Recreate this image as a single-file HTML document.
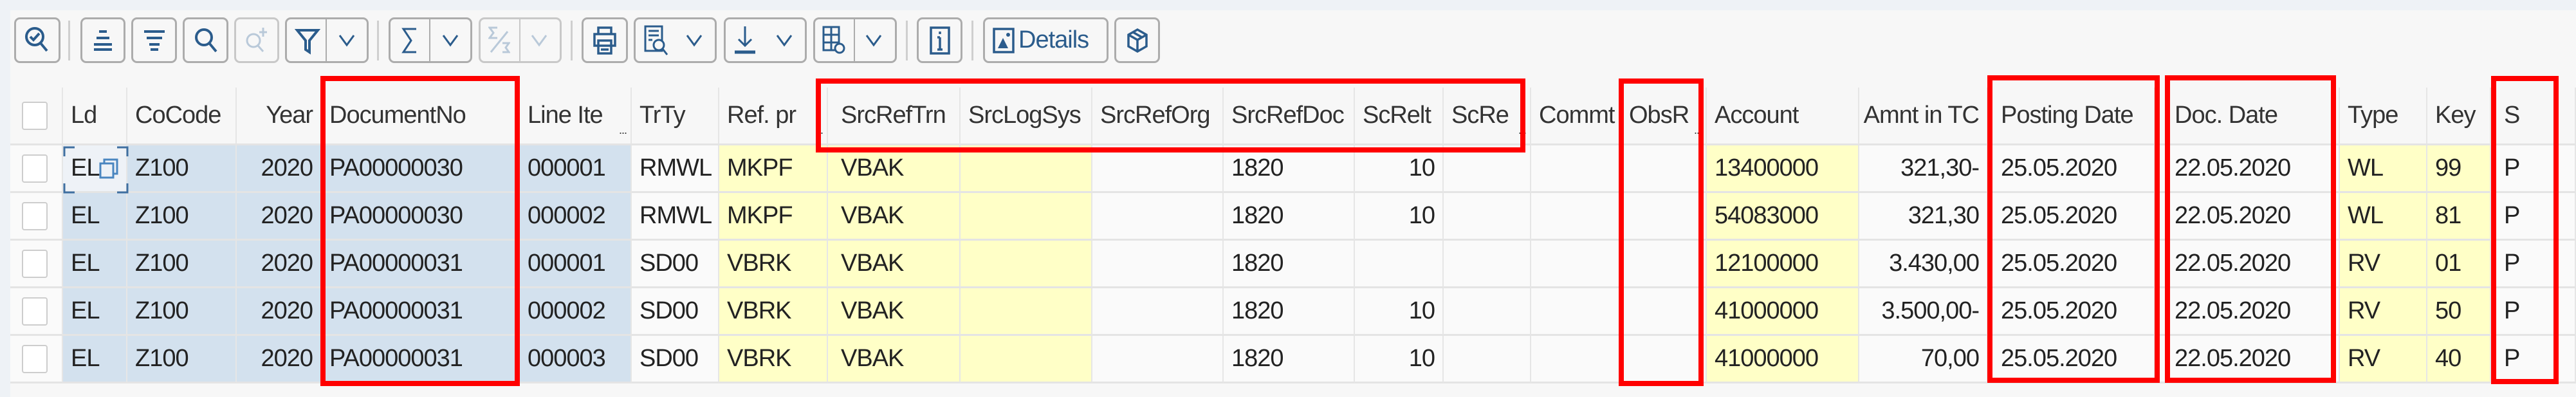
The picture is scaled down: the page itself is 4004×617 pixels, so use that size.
<!DOCTYPE html>
<html><head><meta charset="utf-8">
<style>
*{box-sizing:border-box;margin:0;padding:0}
html,body{width:4004px;height:617px;overflow:hidden;background:#f7f7f7;font-family:"Liberation Sans",sans-serif}
.topband{position:absolute;left:0;top:0;width:4004px;height:16px;background:#eef2f6}
.leftband{position:absolute;left:0;top:0;width:16px;height:617px;background:#eef2f6}
.btn{position:absolute;top:27px;height:71px;border:3px solid #acacac;border-radius:9px;background:#f7f7f7;display:flex;align-items:center;justify-content:center}
.btn .div{position:absolute;top:0;bottom:0;width:2px;background:#acacac}
.sep{position:absolute;top:32px;height:62px;width:3px;background:#cfcfcf}
svg{display:block}
.row{position:absolute;left:16px;display:flex;height:74px}
.hdr{top:136px;height:90px}
.c{height:100%;border-right:2px solid #e6e6e6;border-bottom:3px solid #e4e4e4;font-size:38px;color:#222;display:flex;align-items:center;padding:0 12px;white-space:nowrap;overflow:hidden;background:#fafafa;letter-spacing:-1px}
.hdr .c{background:#f7f7f7;color:#333;position:relative}
.r{justify-content:flex-end}
.p{padding-left:20px}
.q{padding-left:30px}
.b{background:#d3e1ee!important}
.y{background:#ffffc7!important}
.cb{width:40px;height:44px;border:2px solid #cdcdcd;border-radius:4px;background:#fff;margin-left:6px}
.ell{position:absolute;right:6px;bottom:10px;font-size:18px}
.red{position:absolute;border:8px solid #ff0000}
</style></head><body>
<div class="topband"></div><div class="leftband"></div>

<div class="btn" style="left:22px;width:72px"><svg width="44" height="48" viewBox="0 0 44 48"><circle cx="18" cy="18" r="13" fill="none" stroke="#2b5c8c" stroke-width="4"/><path d="M11 18l5 5 9-10M27 28l10 12" fill="none" stroke="#2b5c8c" stroke-width="4"/></svg></div>
<div class="sep" style="left:106px"></div>
<div class="btn" style="left:125px;width:70px"><svg width="40" height="40"><path d="M14 6h12M10 16h20M6 26h28M6 34h28" stroke="#2b5c8c" stroke-width="4"/></svg></div>
<div class="btn" style="left:204px;width:71px"><svg width="40" height="40"><path d="M4 6h32M8 16h24M12 26h16M14 34h12" stroke="#2b5c8c" stroke-width="4"/></svg></div>
<div class="btn" style="left:284px;width:71px"><svg width="40" height="44"><circle cx="17" cy="17" r="12" fill="none" stroke="#2b5c8c" stroke-width="4"/><path d="M26 27l10 12" stroke="#2b5c8c" stroke-width="4"/></svg></div>
<div class="btn" style="left:364px;width:70px;border-color:#c8c8c8"><svg width="40" height="44"><circle cx="15" cy="22" r="10" fill="none" stroke="#b9c9d9" stroke-width="3"/><path d="M22 30l8 9M30 2v14M24 9h12" stroke="#b9c9d9" stroke-width="3"/></svg></div>
<div class="btn" style="left:443px;width:130px;justify-content:flex-start"><svg style="margin-left:12px" width="40" height="44"><path d="M4 6h32L23 22v18l-6-4V22z" fill="none" stroke="#2b5c8c" stroke-width="4"/></svg><div class="div" style="left:60px"></div><svg style="margin-left:28px" width="26" height="20"><path d="M2 2l11 15L24 2" fill="none" stroke="#2b5c8c" stroke-width="3"/></svg></div>
<div class="sep" style="left:586px"></div>
<div class="btn" style="left:604px;width:130px;justify-content:flex-start"><svg style="margin-left:14px" width="30" height="44"><path d="M26 4H6l12 18L6 40h20" fill="none" stroke="#2b5c8c" stroke-width="3"/></svg><div class="div" style="left:60px"></div><svg style="margin-left:36px" width="26" height="20"><path d="M2 2l11 15L24 2" fill="none" stroke="#2b5c8c" stroke-width="3"/></svg></div>
<div class="btn" style="left:744px;width:129px;justify-content:flex-start;border-color:#c8c8c8"><svg style="margin-left:12px" width="34" height="44"><path d="M14 2H2l6 8-6 8h12M4 40L30 8M22 26h10l-5 7 5 7H22" fill="none" stroke="#b9c9d9" stroke-width="3"/></svg><div class="div" style="left:60px;background:#c8c8c8"></div><svg style="margin-left:32px" width="26" height="20"><path d="M2 2l11 15L24 2" fill="none" stroke="#b9c9d9" stroke-width="3"/></svg></div>
<div class="sep" style="left:887px"></div>
<div class="btn" style="left:904px;width:72px"><svg width="40" height="48"><path d="M10 4h20v10H10zM4 14h32v18H4zM10 24h20v20H10zM14 32h12M14 38h12" fill="#f7f7f7" stroke="#2b5c8c" stroke-width="3.5"/></svg></div>
<div class="btn" style="left:985px;width:129px;justify-content:flex-start"><svg style="margin-left:12px" width="44" height="50"><path d="M3 3h26v38H3z" fill="none" stroke="#2b5c8c" stroke-width="3"/><path d="M8 10h16M8 17h16M8 24h6" stroke="#2b5c8c" stroke-width="3"/><circle cx="24" cy="32" r="8" fill="#f7f7f7" stroke="#2b5c8c" stroke-width="3"/><path d="M30 38l7 9" stroke="#2b5c8c" stroke-width="3"/></svg><svg style="margin-left:22px" width="26" height="20"><path d="M2 2l11 15L24 2" fill="none" stroke="#2b5c8c" stroke-width="3"/></svg></div>
<div class="btn" style="left:1125px;width:129px;justify-content:flex-start"><svg style="margin-left:12px" width="36" height="48"><path d="M18 2v30M8 22l10 10 10-10" fill="none" stroke="#2b5c8c" stroke-width="3"/><path d="M2 42h32" stroke="#2b5c8c" stroke-width="5"/></svg><svg style="margin-left:30px" width="26" height="20"><path d="M2 2l11 15L24 2" fill="none" stroke="#2b5c8c" stroke-width="3"/></svg></div>
<div class="btn" style="left:1264px;width:130px;justify-content:flex-start"><svg style="margin-left:10px" width="40" height="48"><path d="M3 3h24v36H3zM3 15h24M3 27h24M15 3v36" fill="none" stroke="#2b5c8c" stroke-width="3"/><circle cx="28" cy="36" r="7" fill="#f7f7f7" stroke="#2b5c8c" stroke-width="3"/></svg><div class="div" style="left:60px"></div><svg style="margin-left:28px" width="26" height="20"><path d="M2 2l11 15L24 2" fill="none" stroke="#2b5c8c" stroke-width="3"/></svg></div>
<div class="sep" style="left:1408px"></div>
<div class="btn" style="left:1425px;width:71px"><svg width="32" height="44"><rect x="2" y="2" width="28" height="40" fill="none" stroke="#2b5c8c" stroke-width="3.5"/><path d="M16 8v4M16 17v19M12 36h8M12 17h4" stroke="#2b5c8c" stroke-width="3.5"/></svg></div>
<div class="sep" style="left:1510px"></div>
<div class="btn" style="left:1528px;width:195px;justify-content:flex-start"><svg style="margin-left:12px" width="34" height="40"><rect x="2" y="2" width="30" height="36" fill="none" stroke="#2b5c8c" stroke-width="3.5"/><path d="M8 32l8-16 8 16z" fill="#2b5c8c"/><circle cx="24" cy="11" r="3" fill="#2b5c8c"/></svg><span style="font-size:38px;color:#2b5c8c;margin-left:6px;letter-spacing:-1px">Details</span></div>
<div class="btn" style="left:1732px;width:71px"><svg width="36" height="40"><path d="M18 3l14 8v18l-14 8-14-8V11z M4 11l14 8 14-8M18 19v18M11 7l14 8" fill="none" stroke="#2b5c8c" stroke-width="3.5"/></svg></div>

<div class="row hdr">
<div class="c" style="width:82px"><div class="cb"></div></div>
<div class="c" style="width:100px">Ld</div>
<div class="c" style="width:170px">CoCode</div>
<div class="c r" style="width:132px">Year</div>
<div class="c" style="width:308px">DocumentNo</div>
<div class="c" style="width:174px">Line Ite<span class="ell">...</span></div>
<div class="c" style="width:136px">TrTy</div>
<div class="c" style="width:169px">Ref. pr<span class="ell">...</span></div>
<div class="c p" style="width:206px">SrcRefTrn</div>
<div class="c" style="width:205px">SrcLogSys</div>
<div class="c" style="width:204px">SrcRefOrg</div>
<div class="c" style="width:204px">SrcRefDoc</div>
<div class="c" style="width:138px">ScRelt</div>
<div class="c" style="width:136px">ScRe<span class="ell">...</span></div>
<div class="c" style="width:140px">Commt</div>
<div class="c" style="width:133px">ObsR<span class="ell">...</span></div>
<div class="c" style="width:237px">Account</div>
<div class="c r" style="width:200px">Amnt in TC</div>
<div class="c p" style="width:260px">Posting Date</div>
<div class="c q" style="width:287px">Doc. Date</div>
<div class="c" style="width:136px">Type</div>
<div class="c" style="width:99px">Key</div>
<div class="c p" style="width:103px">S</div>
<div class="c" style="width:29px"></div>
</div>

<div class="row" style="top:226px">
<div class="c" style="width:82px"><div class="cb"></div></div>
<div class="c" style="width:100px;background:#eef2f7">EL<svg width="36" height="40" style="margin-left:-2px"><rect x="4" y="12" width="20" height="22" fill="none" stroke="#4a86c0" stroke-width="3"/><path d="M10 12V6h20v22h-6" fill="none" stroke="#4a86c0" stroke-width="3"/></svg></div>
<div class="c b" style="width:170px">Z100</div>
<div class="c b r" style="width:132px">2020</div>
<div class="c b" style="width:308px">PA00000030</div>
<div class="c b" style="width:174px">000001</div>
<div class="c" style="width:136px">RMWL</div>
<div class="c y" style="width:169px">MKPF</div>
<div class="c y p" style="width:206px">VBAK</div>
<div class="c y" style="width:205px"></div>
<div class="c" style="width:204px"></div>
<div class="c" style="width:204px">1820</div>
<div class="c r" style="width:138px">10</div>
<div class="c" style="width:136px"></div>
<div class="c" style="width:140px"></div>
<div class="c" style="width:133px"></div>
<div class="c y" style="width:237px">13400000</div>
<div class="c r" style="width:200px">321,30-</div>
<div class="c p" style="width:260px">25.05.2020</div>
<div class="c q" style="width:287px">22.05.2020</div>
<div class="c y" style="width:136px">WL</div>
<div class="c y" style="width:99px">99</div>
<div class="c p" style="width:103px">P</div>
<div class="c" style="width:29px"></div>
</div>
<div class="row" style="top:300px">
<div class="c" style="width:82px"><div class="cb"></div></div>
<div class="c b" style="width:100px">EL</div>
<div class="c b" style="width:170px">Z100</div>
<div class="c b r" style="width:132px">2020</div>
<div class="c b" style="width:308px">PA00000030</div>
<div class="c b" style="width:174px">000002</div>
<div class="c" style="width:136px">RMWL</div>
<div class="c y" style="width:169px">MKPF</div>
<div class="c y p" style="width:206px">VBAK</div>
<div class="c y" style="width:205px"></div>
<div class="c" style="width:204px"></div>
<div class="c" style="width:204px">1820</div>
<div class="c r" style="width:138px">10</div>
<div class="c" style="width:136px"></div>
<div class="c" style="width:140px"></div>
<div class="c" style="width:133px"></div>
<div class="c y" style="width:237px">54083000</div>
<div class="c r" style="width:200px">321,30</div>
<div class="c p" style="width:260px">25.05.2020</div>
<div class="c q" style="width:287px">22.05.2020</div>
<div class="c y" style="width:136px">WL</div>
<div class="c y" style="width:99px">81</div>
<div class="c p" style="width:103px">P</div>
<div class="c" style="width:29px"></div>
</div>
<div class="row" style="top:374px">
<div class="c" style="width:82px"><div class="cb"></div></div>
<div class="c b" style="width:100px">EL</div>
<div class="c b" style="width:170px">Z100</div>
<div class="c b r" style="width:132px">2020</div>
<div class="c b" style="width:308px">PA00000031</div>
<div class="c b" style="width:174px">000001</div>
<div class="c" style="width:136px">SD00</div>
<div class="c y" style="width:169px">VBRK</div>
<div class="c y p" style="width:206px">VBAK</div>
<div class="c y" style="width:205px"></div>
<div class="c" style="width:204px"></div>
<div class="c" style="width:204px">1820</div>
<div class="c r" style="width:138px"></div>
<div class="c" style="width:136px"></div>
<div class="c" style="width:140px"></div>
<div class="c" style="width:133px"></div>
<div class="c y" style="width:237px">12100000</div>
<div class="c r" style="width:200px">3.430,00</div>
<div class="c p" style="width:260px">25.05.2020</div>
<div class="c q" style="width:287px">22.05.2020</div>
<div class="c y" style="width:136px">RV</div>
<div class="c y" style="width:99px">01</div>
<div class="c p" style="width:103px">P</div>
<div class="c" style="width:29px"></div>
</div>
<div class="row" style="top:448px">
<div class="c" style="width:82px"><div class="cb"></div></div>
<div class="c b" style="width:100px">EL</div>
<div class="c b" style="width:170px">Z100</div>
<div class="c b r" style="width:132px">2020</div>
<div class="c b" style="width:308px">PA00000031</div>
<div class="c b" style="width:174px">000002</div>
<div class="c" style="width:136px">SD00</div>
<div class="c y" style="width:169px">VBRK</div>
<div class="c y p" style="width:206px">VBAK</div>
<div class="c y" style="width:205px"></div>
<div class="c" style="width:204px"></div>
<div class="c" style="width:204px">1820</div>
<div class="c r" style="width:138px">10</div>
<div class="c" style="width:136px"></div>
<div class="c" style="width:140px"></div>
<div class="c" style="width:133px"></div>
<div class="c y" style="width:237px">41000000</div>
<div class="c r" style="width:200px">3.500,00-</div>
<div class="c p" style="width:260px">25.05.2020</div>
<div class="c q" style="width:287px">22.05.2020</div>
<div class="c y" style="width:136px">RV</div>
<div class="c y" style="width:99px">50</div>
<div class="c p" style="width:103px">P</div>
<div class="c" style="width:29px"></div>
</div>
<div class="row" style="top:522px">
<div class="c" style="width:82px"><div class="cb"></div></div>
<div class="c b" style="width:100px">EL</div>
<div class="c b" style="width:170px">Z100</div>
<div class="c b r" style="width:132px">2020</div>
<div class="c b" style="width:308px">PA00000031</div>
<div class="c b" style="width:174px">000003</div>
<div class="c" style="width:136px">SD00</div>
<div class="c y" style="width:169px">VBRK</div>
<div class="c y p" style="width:206px">VBAK</div>
<div class="c y" style="width:205px"></div>
<div class="c" style="width:204px"></div>
<div class="c" style="width:204px">1820</div>
<div class="c r" style="width:138px">10</div>
<div class="c" style="width:136px"></div>
<div class="c" style="width:140px"></div>
<div class="c" style="width:133px"></div>
<div class="c y" style="width:237px">41000000</div>
<div class="c r" style="width:200px">70,00</div>
<div class="c p" style="width:260px">25.05.2020</div>
<div class="c q" style="width:287px">22.05.2020</div>
<div class="c y" style="width:136px">RV</div>
<div class="c y" style="width:99px">40</div>
<div class="c p" style="width:103px">P</div>
<div class="c" style="width:29px"></div>
</div>

<svg style="position:absolute;left:98px;top:227px" width="102" height="74"><path d="M2 16V2h16M84 2h16v14M100 58v14H84M18 72H2V58" fill="none" stroke="#3f6fa0" stroke-width="3"/></svg>

<div class="red" style="left:498px;top:118px;width:310px;height:482px"></div>
<div class="red" style="left:1268px;top:122px;width:1103px;height:115px"></div>
<div class="red" style="left:2516px;top:122px;width:132px;height:478px"></div>
<div class="red" style="left:3089px;top:117px;width:268px;height:478px"></div>
<div class="red" style="left:3365px;top:117px;width:266px;height:478px"></div>
<div class="red" style="left:3872px;top:118px;width:105px;height:479px"></div>
</body></html>
